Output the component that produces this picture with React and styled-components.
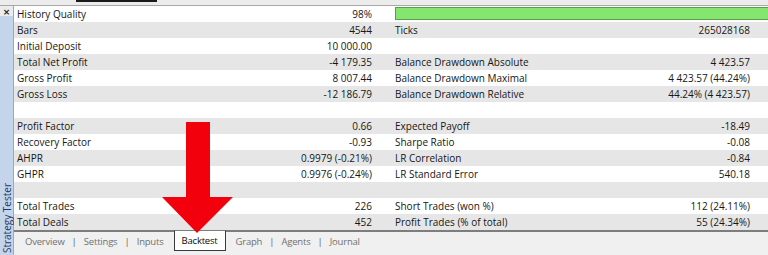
import { Fragment } from "react";
import styled, { createGlobalStyle } from "styled-components";

const GlobalStyle = createGlobalStyle`
    html, body {
        margin: 0;
        padding: 0;
        background: #f0f0f0;
        font-family: "Open Sans", "Liberation Sans", sans-serif;
    }
`

/*+++++++++++++++++++++++++++++++++++++++++++++++++++*/

const Frame = styled('div')`
    position: relative;
    width: 768px;
    height: 255px;
    overflow: hidden;
    display: flex;
    flex-direction: column;
    background: #f0f0f0;
`

const TopStrip = styled('div')`
    height: 5px;
    border-bottom: 1px solid #a8a8a8;
    background: #ececec;
    display: flex;
`

const TopBlock = styled('div')`
    margin-left: 76px;
    width: 81px;
    height: 2px;
    background: #1a1a1a;
`

const Body = styled('div')`
    flex: 1;
    display: flex;
`

const Sidebar = styled('div')`
    width: 13px;
    display: flex;
    flex-direction: column;
    border-right: 1px solid #9aa8ba;
`

const Close = styled('div')`
    height: 10px;
    background: #ececec;
    font-family: "DejaVu Sans", sans-serif;
    font-size: 9px;
    font-weight: bold;
    line-height: 12px;
    text-align: center;
    color: #222;
`

const SideBand = styled('div')`
    flex: 1;
    background: #c4d4ea;
    display: flex;
    align-items: flex-end;
    justify-content: center;
`

const SideLabel = styled('span')`
    writing-mode: vertical-rl;
    transform: rotate(180deg);
    font-size: 10px;
    line-height: 12px;
    color: #1d3a66;
    margin-bottom: 2px;
`

const Main = styled('div')`
    flex: 1;
    display: flex;
    flex-direction: column;
`

const Table = styled('div')`
    display: flex;
    flex-direction: column;
`

const Row = styled('div')`
    height: 16px;
    display: grid;
    grid-template-columns: 200px 155px 23px 200px 155px 1fr;
    padding-left: 3px;
    align-items: center;
    background: ${p => (p.$shade ? '#e6e6e6' : '#ffffff')};
    font-size: 10px;
    color: #161616;
`

const Label = styled('span')`
    grid-column: ${p => p.$col};
    white-space: nowrap;
`

const Value = styled('span')`
    grid-column: ${p => p.$col};
    text-align: right;
    white-space: nowrap;
`

const QualityBar = styled('div')`
    grid-column: 4 / 7;
    height: 11px;
    margin-top: -2px;
    background: #84e66f;
    border: 1px solid #5a9e4c;
    border-right: none;
`

const TabBar = styled('div')`
    flex: 1;
    border-top: 2px solid #7d7d7d;
    display: flex;
    align-items: flex-start;
    padding-left: 11px;
    font-size: 9.5px;
    color: #707070;
`

const Tab = styled('div')`
    height: 17px;
    line-height: 16px;
    padding: 2px ${p => (p.$active ? '7px' : '0')} 0;
    margin-top: ${p => (p.$active ? '-2px' : '0')};
    background: ${p => (p.$active ? '#ffffff' : 'transparent')};
    border: ${p => (p.$active ? '1px solid #3a3a3a' : 'none')};
    border-top-color: ${p => (p.$active ? '#7d7d7d' : 'transparent')};
    color: ${p => (p.$active ? '#0a0a0a' : '#707070')};
    letter-spacing: ${p => (p.$active ? '-0.2px' : '-0.2px')};
`

const Sep = styled('span')`
    padding: 2px 7px 0;
    line-height: 16px;
    color: #606060;
`

const Gap = styled('span')`
    width: 10px;
`

const Arrow = styled('svg')`
    position: absolute;
    left: 162px;
    top: 122px;
`

/*+++++++++++++++++++++++++++++++++++++++++++++++++++*/

const rows = [
    ["History Quality", "98%", "bar", ""],
    ["Bars", "4544", "Ticks", "265028168"],
    ["Initial Deposit", "10 000.00", "", ""],
    ["Total Net Profit", "-4 179.35", "Balance Drawdown Absolute", "4 423.57"],
    ["Gross Profit", "8 007.44", "Balance Drawdown Maximal", "4 423.57 (44.24%)"],
    ["Gross Loss", "-12 186.79", "Balance Drawdown Relative", "44.24% (4 423.57)"],
    ["", "", "", ""],
    ["Profit Factor", "0.66", "Expected Payoff", "-18.49"],
    ["Recovery Factor", "-0.93", "Sharpe Ratio", "-0.08"],
    ["AHPR", "0.9979 (-0.21%)", "LR Correlation", "-0.84"],
    ["GHPR", "0.9976 (-0.24%)", "LR Standard Error", "540.18"],
    ["", "", "", ""],
    ["Total Trades", "226", "Short Trades (won %)", "112 (24.11%)"],
    ["Total Deals", "452", "Profit Trades (% of total)", "55 (24.34%)"],
]

const tabs = ["Overview", "Settings", "Inputs", "Backtest", "Graph", "Agents", "Journal"]
const activeTab = "Backtest"

const App = () => {

    return (
        <Frame>
            <GlobalStyle />
            <TopStrip>
                <TopBlock />
            </TopStrip>
            <Body>
                <Sidebar>
                    <Close>×</Close>
                    <SideBand>
                        <SideLabel>Strategy Tester</SideLabel>
                    </SideBand>
                </Sidebar>
                <Main>
                    <Table>
                        {rows.map((r, i) => (
                            <Row key={i} $shade={i % 2 === 1}>
                                <Label $col={1}>{r[0]}</Label>
                                <Value $col={2}>{r[1]}</Value>
                                {r[2] === "bar" ? (
                                    <QualityBar />
                                ) : (
                                    <>
                                        <Label $col={4}>{r[2]}</Label>
                                        <Value $col={5}>{r[3]}</Value>
                                    </>
                                )}
                            </Row>
                        ))}
                    </Table>
                    <TabBar>
                        {tabs.map((t, i) => {
                            const nearActive = t === activeTab || tabs[i - 1] === activeTab;
                            return (
                                <Fragment key={t}>
                                    {i > 0 && (nearActive ? <Gap /> : <Sep>|</Sep>)}
                                    <Tab $active={t === activeTab}>{t}</Tab>
                                </Fragment>
                            );
                        })}
                    </TabBar>
                </Main>
            </Body>
            <Arrow width="72" height="112" viewBox="0 0 72 112">
                <polygon points="24,0 48,0 48,75 71,75 35,111 0,75 24,75" fill="#f2000c" />
            </Arrow>
        </Frame>
    );
}

export default App;
